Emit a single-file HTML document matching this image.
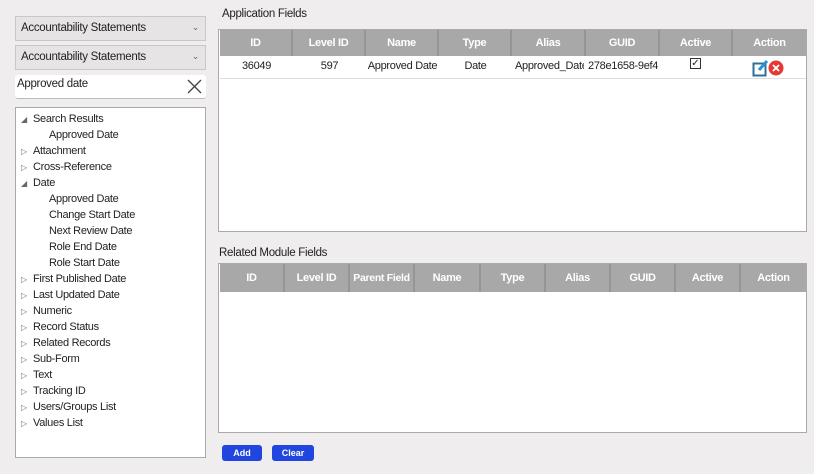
<!DOCTYPE html>
<html><head><style>
*{margin:0;padding:0;box-sizing:border-box}
body{width:814px;height:474px;background:#efedee;font-family:"Liberation Sans",sans-serif;font-size:11px;color:#222;position:relative;overflow:hidden}
.a{position:absolute}
.dd{left:15px;width:191px;height:25px;background:#e6e4e5;border:1px solid #c9c7c8;padding:5px 5px;font-size:11.5px;letter-spacing:-0.3px}
.dd span{position:absolute;right:6px;top:5px;font-size:9px;color:#666}
.tree{left:15px;top:107px;width:191px;height:351px;background:#fff;border:1px solid #aaa}
.tree div{position:absolute;font-size:11px;letter-spacing:-0.3px;white-space:nowrap}
.tri{color:#666;font-size:8px;display:inline-block;width:12px}
.tbl{background:#fff;border:1px solid #aaa}
.hdr{position:absolute;background:#a8a8a8;color:#fff;font-weight:bold;font-size:11px;text-align:center;border-right:2px solid #959595;letter-spacing:-0.3px}
.cell{position:absolute;font-size:11px;text-align:center;letter-spacing:-0.3px;white-space:nowrap;overflow:hidden}
.btn{position:absolute;top:445px;height:16px;background:#2146e0;color:#fff;font-weight:bold;font-size:9px;text-align:center;line-height:16px;border-radius:3px}
</style></head><body>
<div class="a dd" style="top:16px">Accountability Statements<span>&#8964;</span></div>
<div class="a dd" style="top:45px">Accountability Statements<span>&#8964;</span></div>
<div class="a" style="left:15px;top:75px;width:191px;height:24px;background:#fff;border-bottom:1px solid #bbb;border-radius:3px;padding:3px 2px;font-size:11.5px;letter-spacing:-0.3px">Approved date
<svg class="a" style="right:4px;top:4px" width="15" height="15"><path d="M1 1L14 14M14 1L1 14" stroke="#444" stroke-width="1.3"/></svg></div>
<div class="a tree">
<div style="left:5px;top:5px"><span class="tri">&#9698;</span>Search Results</div>
<div style="left:33px;top:21px">Approved Date</div>
<div style="left:5px;top:37px"><span class="tri">&#9655;</span>Attachment</div>
<div style="left:5px;top:53px"><span class="tri">&#9655;</span>Cross-Reference</div>
<div style="left:5px;top:69px"><span class="tri">&#9698;</span>Date</div>
<div style="left:33px;top:85px">Approved Date</div>
<div style="left:33px;top:101px">Change Start Date</div>
<div style="left:33px;top:117px">Next Review Date</div>
<div style="left:33px;top:133px">Role End Date</div>
<div style="left:33px;top:149px">Role Start Date</div>
<div style="left:5px;top:165px"><span class="tri">&#9655;</span>First Published Date</div>
<div style="left:5px;top:181px"><span class="tri">&#9655;</span>Last Updated Date</div>
<div style="left:5px;top:197px"><span class="tri">&#9655;</span>Numeric</div>
<div style="left:5px;top:213px"><span class="tri">&#9655;</span>Record Status</div>
<div style="left:5px;top:229px"><span class="tri">&#9655;</span>Related Records</div>
<div style="left:5px;top:245px"><span class="tri">&#9655;</span>Sub-Form</div>
<div style="left:5px;top:261px"><span class="tri">&#9655;</span>Text</div>
<div style="left:5px;top:277px"><span class="tri">&#9655;</span>Tracking ID</div>
<div style="left:5px;top:293px"><span class="tri">&#9655;</span>Users/Groups List</div>
<div style="left:5px;top:309px"><span class="tri">&#9655;</span>Values List</div>
</div>

<div class="a" style="left:222px;top:8px;font-size:11.5px;letter-spacing:-0.3px">Application Fields</div>
<div class="a tbl" style="left:218px;top:29px;width:589px;height:203px"></div>
<div class="hdr" style="left:220px;top:30px;width:73px;height:26px;line-height:27px">ID</div>
<div class="hdr" style="left:293px;top:30px;width:73px;height:26px;line-height:27px">Level ID</div>
<div class="hdr" style="left:366px;top:30px;width:73px;height:26px;line-height:27px">Name</div>
<div class="hdr" style="left:439px;top:30px;width:73px;height:26px;line-height:27px">Type</div>
<div class="hdr" style="left:512px;top:30px;width:74px;height:26px;line-height:27px">Alias</div>
<div class="hdr" style="left:586px;top:30px;width:74px;height:26px;line-height:27px">GUID</div>
<div class="hdr" style="left:660px;top:30px;width:73px;height:26px;line-height:27px">Active</div>
<div class="hdr" style="left:733px;top:30px;width:73px;height:26px;line-height:27px;border-right:none">Action</div>
<div class="a" style="left:220px;top:78px;width:586px;height:1px;background:#ddd"></div>
<div class="cell" style="left:220px;top:60px;width:73px">36049</div>
<div class="cell" style="left:293px;top:60px;width:73px">597</div>
<div class="cell" style="left:366px;top:60px;width:73px">Approved Date</div>
<div class="cell" style="left:439px;top:60px;width:73px">Date</div>
<div class="cell" style="left:512px;top:60px;width:72px;text-align:left;padding-left:3px">Approved_Date</div>
<div class="cell" style="left:586px;top:60px;width:74px;text-align:left;padding-left:2px">278e1658-9ef4</div>
<div class="a" style="left:690px;top:58px;width:11px;height:11px;border:1px solid #333;background:#fff;font-size:10px;line-height:9px;text-align:center">&#10003;</div>
<svg class="a" style="left:752px;top:58px" width="34" height="20"><rect x="1.5" y="5.5" width="12" height="12" fill="none" stroke="#2f6f9a" stroke-width="2"/><path d="M7 12L15 3" stroke="#2b8fd8" stroke-width="3"/><circle cx="24" cy="10" r="7.5" fill="#e53935"/><path d="M21 7L27 13M27 7L21 13" stroke="#fff" stroke-width="1.8"/></svg>

<div class="a" style="left:219px;top:247px;font-size:11.5px;letter-spacing:-0.3px">Related Module Fields</div>
<div class="a tbl" style="left:218px;top:263px;width:589px;height:170px"></div>
<div class="hdr" style="left:220px;top:264px;width:65px;height:28px;line-height:29px">ID</div>
<div class="hdr" style="left:285px;top:264px;width:65px;height:28px;line-height:29px">Level ID</div>
<div class="hdr" style="left:350px;top:264px;width:65px;height:28px;line-height:29px;white-space:nowrap;overflow:hidden;font-size:10.5px">Parent Field</div>
<div class="hdr" style="left:415px;top:264px;width:66px;height:28px;line-height:29px">Name</div>
<div class="hdr" style="left:481px;top:264px;width:65px;height:28px;line-height:29px">Type</div>
<div class="hdr" style="left:546px;top:264px;width:65px;height:28px;line-height:29px">Alias</div>
<div class="hdr" style="left:611px;top:264px;width:65px;height:28px;line-height:29px">GUID</div>
<div class="hdr" style="left:676px;top:264px;width:65px;height:28px;line-height:29px">Active</div>
<div class="hdr" style="left:741px;top:264px;width:65px;height:28px;line-height:29px;border-right:none">Action</div>

<div class="btn" style="left:222px;width:40px">Add</div>
<div class="btn" style="left:272px;width:42px">Clear</div>
</body></html>
